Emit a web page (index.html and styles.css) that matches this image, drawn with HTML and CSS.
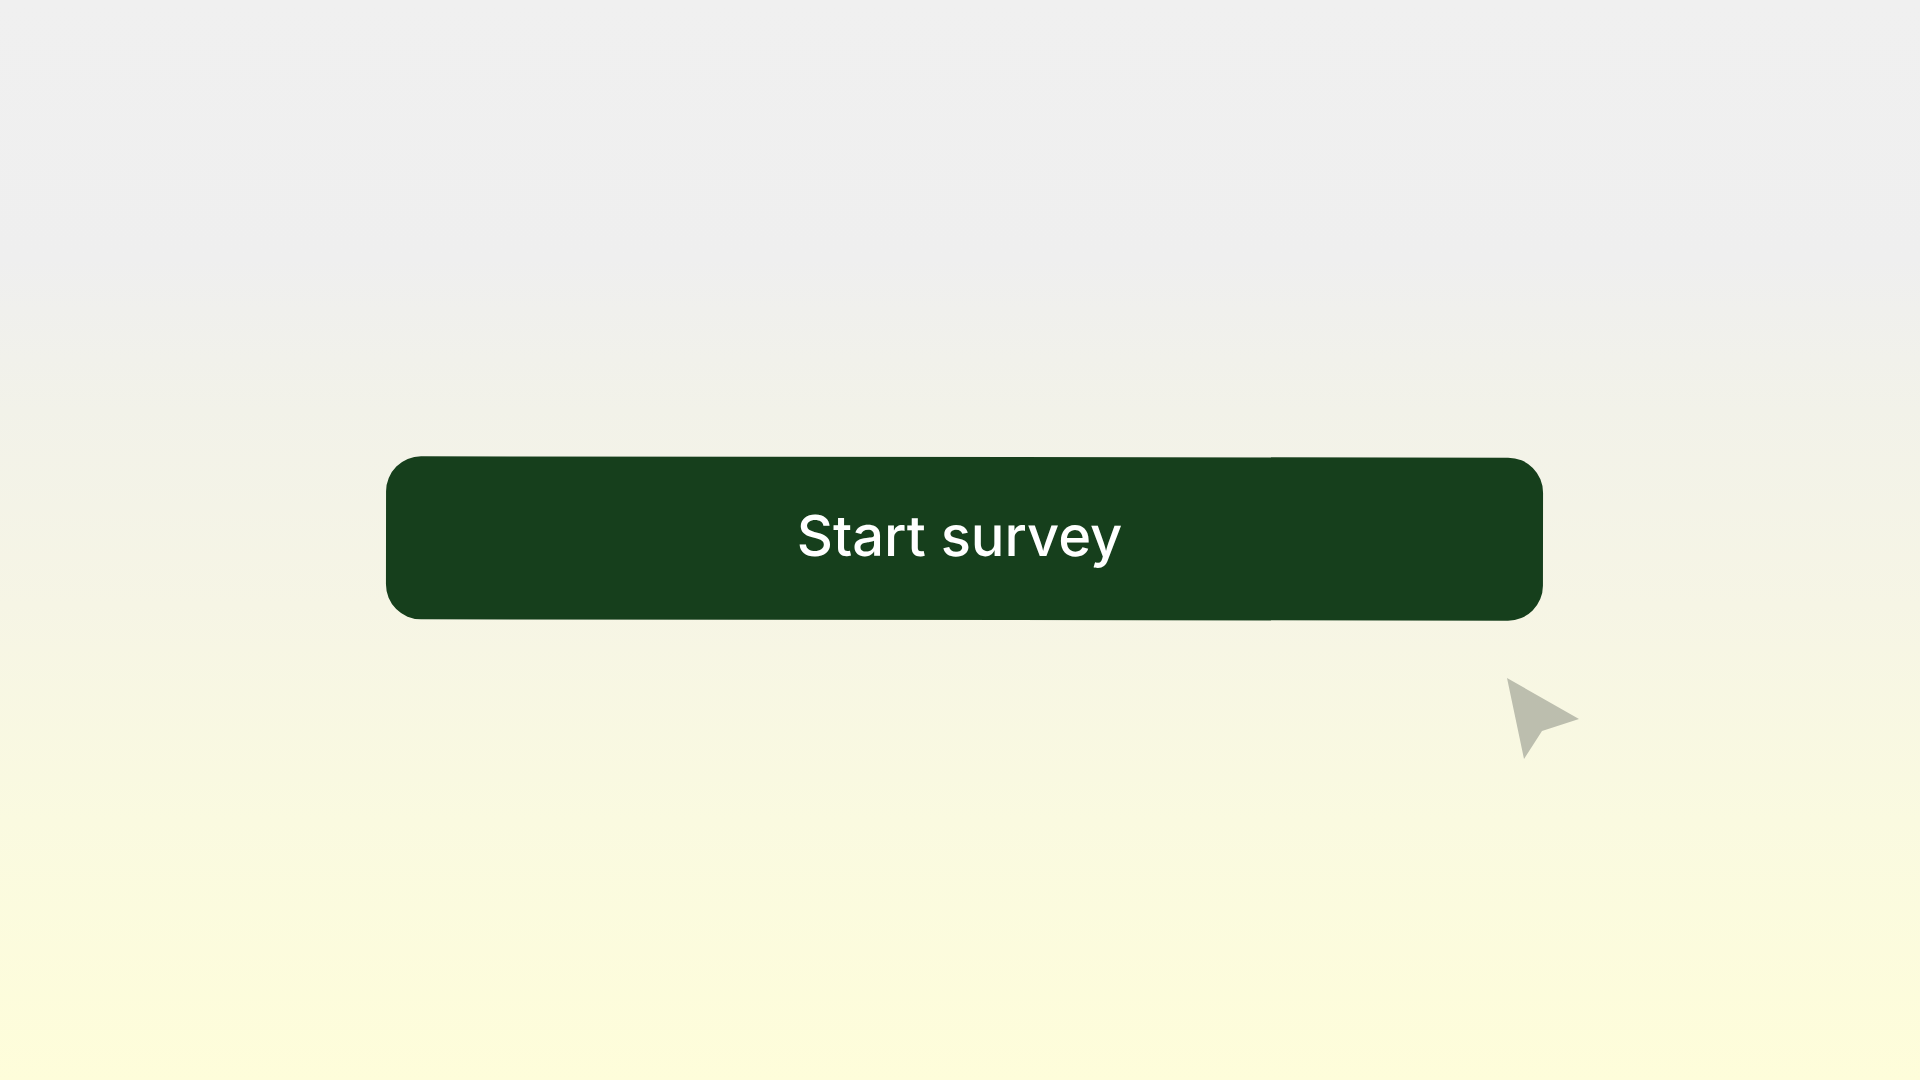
FILE: index.html
```html
<!DOCTYPE html>
<html lang="en">
<head>
  <meta charset="UTF-8">
  <title>Start survey</title>
  <meta name="viewport" content="width=device-width, initial-scale=1.0">
  <link rel="stylesheet" href="styles.css">
</head>
<body>
  <main class="stage">
    <div class="action">
      <button type="button" class="start-btn">Start survey</button>
      <svg class="cursor" viewBox="0 0 72 81" aria-hidden="true">
        <path d="M0 0 L72 41 L35 53 L17 81 Z" />
      </svg>
    </div>
  </main>
</body>
</html>
```

FILE: styles.css
```css
body {
  margin: 0;
  font-family: Inter, "Liberation Sans", sans-serif;
  background: #efefef;
}

.stage {
  display: flex;
  align-items: center;
  justify-content: center;
  box-sizing: border-box;
  min-height: 100vh;
  padding: 0 16px 3px 24px;
  overflow: hidden;
  background: linear-gradient(#f0f0f0 0%, #efefef 24%, #f2f2e9 38%, #f6f5e5 56%, #fafae0 76%, #fefdda 100%);
}

.action {
  position: relative;
  width: 100%;
  max-width: 1157px;
}

.start-btn {
  display: block;
  width: 100%;
  padding: 42px 10px 46px 0;
  border: none;
  border-radius: 35px;
  background: #163f1c;
  color: #fff;
  font-family: inherit;
  font-size: 56px;
  font-weight: 500;
  line-height: 75px;
  cursor: pointer;
  transform: rotate(0.07deg);
}

.start-btn:hover {
  background: #1c4c23;
}

/* Pointer resting below the button's right corner */
.cursor {
  position: absolute;
  top: 221px;
  right: -36px;
  width: 72px;
  height: 81px;
  fill: #bcbeae;
  pointer-events: none;
}
```
